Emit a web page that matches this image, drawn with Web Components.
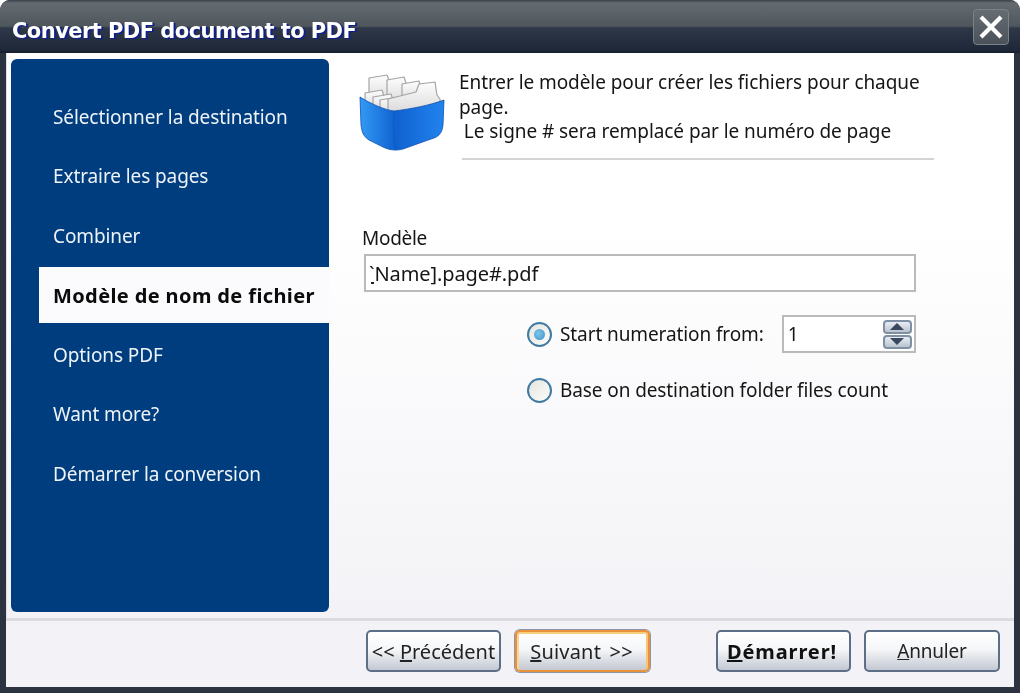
<!DOCTYPE html>
<html lang="fr">
<head>
<meta charset="utf-8">
<title>Convert PDF document to PDF</title>
<style>
  html, body { margin: 0; padding: 0; background: #fff; }
  body { font: 19px "Noto Sans", "DejaVu Sans", sans-serif; color: #111; }
</style>
</head>
<body>
<wizard-window>
  <span slot="title">Convert PDF document to PDF</span>
  <side-nav slot="nav">
    <nav-item>Sélectionner la destination</nav-item>
    <nav-item>Extraire les pages</nav-item>
    <nav-item>Combiner</nav-item>
    <nav-item active>Modèle de nom de fichier</nav-item>
    <nav-item>Options PDF</nav-item>
    <nav-item>Want more?</nav-item>
    <nav-item>Démarrer la conversion</nav-item>
  </side-nav>
  <pattern-page slot="page"></pattern-page>
  <wizard-button slot="back"><span>&lt;&lt; <u>P</u>récédent</span></wizard-button>
  <wizard-button slot="back" focused><span style="word-spacing:3px;letter-spacing:.2px;margin-left:-2px"><u>S</u>uivant &gt;&gt;</span></wizard-button>
  <wizard-button slot="end" strong><span style="letter-spacing:.9px;margin-left:-3px"><u>D</u>émarrer!</span></wizard-button>
  <wizard-button slot="end" style="width:136px"><span style="font-size:19px;letter-spacing:-.2px"><u>A</u>nnuler</span></wizard-button>
</wizard-window>

<script>
class WizardWindow extends HTMLElement {
  constructor() {
    super();
    this.attachShadow({ mode: "open" });
    this.shadowRoot.innerHTML = `
      <style>
        :host {
          display: flex;
          flex-direction: column;
          width: 1020px;
          height: 693px;
          box-sizing: border-box;
          background: #2b3340;
          border-radius: 10px 10px 0 0;
          overflow: hidden;
          padding: 0 6px 6px;
          filter: blur(0.4px);
        }
        .title {
          flex: 0 0 53px;
          margin: 0 -6px;
          padding: 0 6px 0 12px;
          display: flex;
          align-items: center;
          justify-content: space-between;
          background: linear-gradient(#3a4048 0, #646b70 3px, #4f575d 26px, #2f3848 28px, #1d2738 51px, #141b28 53px);
        }
        .title ::slotted(span) {
          font: bold 21px "DejaVu Sans", sans-serif;
          letter-spacing: -0.55px;
          color: #fff;
          text-shadow: 1px 1px 0 #10208a, 2px 1px 1px #10208a;
          padding-top: 8px;
        }
        .close {
          width: 36px;
          height: 36px;
          box-sizing: border-box;
          margin-right: 5px;
          border: 1px solid #7b8186;
          border-radius: 4px;
          background: linear-gradient(#666d72, #4a515a);
          display: flex;
          align-items: center;
          justify-content: center;
        }
        .body {
          flex: 1;
          min-height: 0;
          display: flex;
          background: linear-gradient(#fff 0, #fff 30%, #f3f3f7 100%);
          border-left: 1px solid #dfe0e4;
        }
        .nav { flex: 0 0 323px; padding: 6px 0 6px 4px; box-sizing: border-box; display: flex; }
        .page { flex: 1; min-width: 0; }
        .footer {
          flex: 0 0 69px;
          display: flex;
          justify-content: flex-end;
          align-items: flex-start;
          padding: 9px 14px 0 0;
          box-sizing: border-box;
          border-top: 3px solid #dcdcde;
          background: #f3f3f7;
        }
        .group { display: flex; gap: 14px; }
        .group.first { margin-right: 66px; }
        .group.last { gap: 13px; }
      </style>
      <div class="title">
        <slot name="title"></slot>
        <div class="close">
          <svg width="26" height="26" viewBox="0 0 26 26"><path d="M3 3 L23 23 M23 3 L3 23" stroke="#fff" stroke-width="4.2" fill="none"/></svg>
        </div>
      </div>
      <div class="body">
        <div class="nav"><slot name="nav"></slot></div>
        <div class="page"><slot name="page"></slot></div>
      </div>
      <div class="footer">
        <div class="group first"><slot name="back"></slot></div>
        <div class="group last"><slot name="end"></slot></div>
      </div>
    `;
  }
}

class SideNav extends HTMLElement {
  constructor() {
    super();
    this.attachShadow({ mode: "open" });
    this.shadowRoot.innerHTML = `
      <style>
        :host {
          display: flex;
          flex-direction: column;
          gap: 3.5px;
          width: 318px;
          box-sizing: border-box;
          padding: 29.8px 0 0 28px;
          background: #003d7e;
          border-radius: 6px;
        }
      </style>
      <slot></slot>
    `;
  }
}

class NavItem extends HTMLElement {
  constructor() {
    super();
    this.attachShadow({ mode: "open" });
    this.shadowRoot.innerHTML = `
      <style>
        :host {
          display: flex;
          align-items: center;
          height: 56px;
          padding: 0 0 0 14px;
          box-sizing: border-box;
          font: 19px "Noto Sans", sans-serif;
          letter-spacing: -0.1px;
          color: #eef3f8;
          white-space: nowrap;
        }
        :host([active]) {
          background: #fbfbfd;
          color: #0b0b0b;
          font-size: 20px;
          font-weight: 700;
          letter-spacing: 0.38px;
        }
      </style>
      <slot></slot>
    `;
  }
}

class WizardButton extends HTMLElement {
  constructor() {
    super();
    this.attachShadow({ mode: "open" });
    this.shadowRoot.innerHTML = `
      <style>
        :host {
          display: flex;
          align-items: center;
          justify-content: center;
          width: 135px;
          height: 42px;
          box-sizing: border-box;
          border: 2px solid #5c6f86;
          border-radius: 5px;
          background: linear-gradient(#fff 0, #f6f7f9 45%, #c3c8d2 100%);
          font: 20px "Noto Sans", sans-serif;
          color: #222;
          white-space: nowrap;
        }
        :host([focused]) {
          border-color: #e8913a;
          box-shadow: inset 0 2px 0 #f7cc7c, inset 2px 0 0 #f7d79a, inset -2px 0 0 #f5c67a, 0 0 0 1px #8a97a8;
        }
        :host([strong]) { font-weight: 700; color: #111; }
      </style>
      <slot></slot>
    `;
  }
}

class RadioOption extends HTMLElement {
  constructor() {
    super();
    this.attachShadow({ mode: "open" });
    this.shadowRoot.innerHTML = `
      <style>
        :host { display: flex; align-items: center; gap: 8px; white-space: nowrap; letter-spacing: -0.1px; }
        .dot {
          width: 25px;
          height: 25px;
          box-sizing: border-box;
          border: 2px solid #3f7aa3;
          border-radius: 50%;
          background: linear-gradient(135deg, #e6e6e0, #fbfbf9);
          display: flex;
          align-items: center;
          justify-content: center;
        }
        :host([checked]) .dot::after {
          content: "";
          width: 11px;
          height: 11px;
          border-radius: 50%;
          background: radial-gradient(circle at 40% 40%, #7cc4ea, #3f92cc);
        }
      </style>
      <div class="dot"></div>
      <slot></slot>
    `;
  }
}

class SpinBox extends HTMLElement {
  constructor() {
    super();
    this.attachShadow({ mode: "open" });
    this.shadowRoot.innerHTML = `
      <style>
        :host {
          display: flex;
          align-items: center;
          justify-content: space-between;
          width: 134px;
          height: 38px;
          box-sizing: border-box;
          padding: 0 2px 0 4px;
          border: 2px solid #b9babc;
          background: #fff;
        }
        .btns { display: flex; flex-direction: column; gap: 1px; }
        .btns div {
          width: 29px;
          height: 14px;
          box-sizing: border-box;
          border: 2px solid #7f90a4;
          border-radius: 4px;
          background: linear-gradient(#e8edf3, #b9c3cf);
          display: flex;
          align-items: center;
          justify-content: center;
        }
      </style>
      <slot></slot>
      <div class="btns">
        <div><svg width="14" height="7" viewBox="0 0 14 7"><path d="M7 0 L14 7 H0 Z" fill="#39485c"/></svg></div>
        <div><svg width="14" height="7" viewBox="0 0 14 7"><path d="M0 0 H14 L7 7 Z" fill="#39485c"/></svg></div>
      </div>
    `;
  }
}

class PatternPage extends HTMLElement {
  constructor() {
    super();
    this.attachShadow({ mode: "open" });
    this.shadowRoot.innerHTML = `
      <style>
        :host {
          display: flex;
          flex-direction: column;
          height: 100%;
          box-sizing: border-box;
          padding: 16px 0 0 27px;
          font: 19px "Noto Sans", sans-serif;
          color: #151515;
        }
        .head { display: flex; gap: 12px; width: 579px; }
        .head svg { flex: none; margin-top: 3px; }
        .intro { line-height: 24.5px; padding-top: 1px; white-space: pre; letter-spacing: -0.07px; }
        hr {
          align-self: flex-start;
          width: 472px;
          height: 2px;
          margin: 6px 0 0 105px;
          border: 0;
          background: #d4d4d6;
        }
        label { display: block; margin: 65px 0 2px 5px; line-height: 27px; height: 27px; letter-spacing: -0.3px; }
        .field {
          position: relative;
          width: 552px;
          height: 38px;
          box-sizing: border-box;
          margin-left: 7px;
          padding: 0 3px;
          display: flex;
          align-items: center;
          border: 2px solid #b9babc;
          background: #fff;
          white-space: pre;
          font-size: 20px;
          letter-spacing: -0.1px;
        }
        .field::after {
          content: "";
          position: absolute;
          left: 5px;
          bottom: 6px;
          width: 3px;
          height: 2px;
          background: #222;
        }
        .options {
          margin: 23px 0 0 170px;
          display: grid;
          grid-template-columns: max-content;
          row-gap: 24px;
        }
        .row { display: flex; align-items: center; gap: 18px; }
      </style>
      <div class="head">
        <svg width="90" height="80" viewBox="356 72 90 80">
          <defs>
            <linearGradient id="box" x1="0" x2="1" y1="0" y2="0">
              <stop offset="0" stop-color="#339af5"/>
              <stop offset="0.42" stop-color="#0f62d0"/>
              <stop offset="1" stop-color="#2283ee"/>
            </linearGradient>
            <linearGradient id="sheet" x1="0" x2="0" y1="0" y2="1">
              <stop offset="0" stop-color="#fdfdfd"/>
              <stop offset="1" stop-color="#dadada"/>
            </linearGradient>
          </defs>
          <g fill="url(#sheet)" stroke="#a4a4a4" stroke-width="1.2" stroke-linejoin="round">
            <path d="M368 104 V78 L386 75 L388 80 L389 104 Z"/>
            <path d="M386 104 V80 L403 77 L405 83 V104 Z"/>
            <path d="M401 104 V84 L418 81 L420 88 V104 Z"/>
            <path d="M364 106 V93 L381 90 L383 96 V110 Z"/>
            <path d="M372 108 V97 L390 94 L392 100 V112 Z"/>
            <path d="M379 110 V100 L397 97 L399 103 V113 Z"/>
            <path d="M387 113 V99 L415 92 L418 84 L434 82 L436 95 L439 99 V108 Z"/>
          </g>
          <path d="M359 97 C370 104 384 110 393 111 C410 109 430 105 443 100 L442 125 C441 134 437 137 430 139 L402 149 C395 151 388 150 382 147 L368 140 C362 136 361 132 360 125 Z" fill="url(#box)" stroke="#0b4fb0" stroke-width="0.8"/>
          <path d="M393 111 C392 125 392 140 395 150" stroke="#0a4cae" stroke-width="1" opacity="0.35" fill="none"/>
        </svg>
        <div class="intro">Entrer le modèle pour créer les fichiers pour chaque
page.
 Le signe # sera remplacé par le numéro de page</div>
      </div>
      <hr>
      <label>Modèle</label>
      <div class="field">\`Name].page#.pdf</div>
      <div class="options">
        <div class="row">
          <radio-option checked>Start numeration from:</radio-option>
          <spin-box>1</spin-box>
        </div>
        <radio-option>Base on destination folder files count</radio-option>
      </div>
    `;
  }
}

customElements.define("wizard-window", WizardWindow);
customElements.define("side-nav", SideNav);
customElements.define("nav-item", NavItem);
customElements.define("wizard-button", WizardButton);
customElements.define("radio-option", RadioOption);
customElements.define("spin-box", SpinBox);
customElements.define("pattern-page", PatternPage);
</script>
</body>
</html>
